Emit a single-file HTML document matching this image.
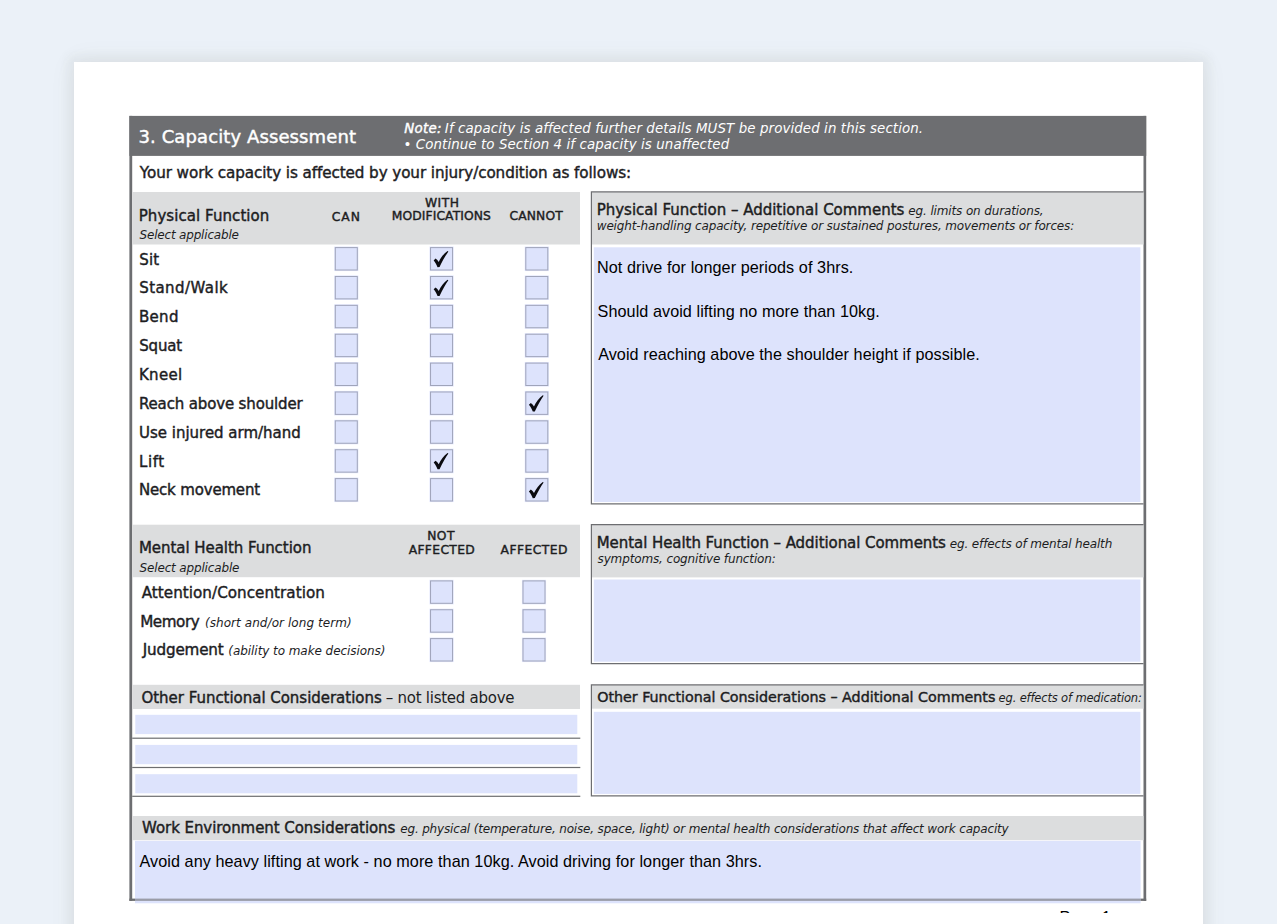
<!DOCTYPE html>
<html lang="en">
<head>
<meta charset="utf-8">
<title>Certificate of Capacity – 3. Capacity Assessment</title>
<style>
*{box-sizing:border-box;margin:0;padding:0}
html,body{width:1277px;height:924px;overflow:hidden;background:#ebf1f8}
body{position:relative;font-family:"DejaVu Sans","Liberation Sans",sans-serif;color:#1d1d1f}
#paper{position:absolute;left:74px;top:62px;width:1129.4px;height:900px;background:#fff;box-shadow:0 0 9px 6px rgba(100,98,70,.055),0 0 24px 0 rgba(100,98,70,.08)}
#shapes{position:absolute;left:0;top:0;width:1277px;height:924px}
.ln{fill:#6d6e71}.g{fill:#dcddde}.f{fill:#dde3fc}.bb{fill:#9a9ca8}
.ol{fill:none;stroke:#6d6e71;stroke-width:1.2}
.ch{fill:#e4e8fd}.cb{fill:#dde3fc;stroke:#9fa4ba;stroke-width:1}.ck{fill:#0b0b10}
.t{position:absolute;white-space:pre;line-height:1;color:#1d1d1f}
.w{color:#fff}
.m{-webkit-text-stroke:.42px currentColor}
.it{font-style:italic}
.bi{font-style:italic;font-weight:bold}
.ar{font-family:"Liberation Sans",sans-serif;color:#000}
#pg{position:absolute;left:1059.5px;top:910.4px;width:60px;height:2.8px;overflow:hidden}
</style>
</head>
<body>
<div id="paper"></div>
<!-- frame, panels, fields, checkboxes -->
<svg id="shapes" viewBox="0 0 1277 924">
<rect class="ln" x="129.4" y="115.9" width="2.8" height="785"/>
<rect class="ln" x="1143.5" y="115.9" width="2.7" height="785"/>
<rect class="ln" x="129.4" y="115.9" width="1016.8" height="40"/>
<rect class="g" x="132.2" y="192" width="447.8" height="52.5"/>
<rect class="g" x="132.2" y="524.7" width="447.8" height="52.5"/>
<rect class="g" x="132.2" y="684.8" width="447.8" height="24.2"/>
<rect class="g" x="132.2" y="816" width="1011.3" height="24.2"/>
<rect class="g" x="591.4" y="191.9" width="552.1" height="52.6"/>
<rect class="f" x="593.8" y="247.3" width="546.6" height="254.7"/>
<path class="ol" d="M1143.5 191.9H591.4V503.9H1143.5"/>
<rect class="g" x="591.4" y="524.7" width="552.1" height="52.7"/>
<rect class="f" x="593.8" y="579.5" width="546.6" height="82.2"/>
<path class="ol" d="M1143.5 524.7H591.4V663.7H1143.5"/>
<rect class="g" x="591.4" y="684.9" width="552.1" height="23.8"/>
<rect class="f" x="593.8" y="711.8" width="546.6" height="82.1"/>
<path class="ol" d="M1143.5 684.9H591.4V795.8H1143.5"/>
<rect class="f" x="135.3" y="714.8" width="442" height="19.3"/>
<rect class="ln" x="132.2" y="737.6" width="448.1" height="1.2"/>
<rect class="f" x="135.3" y="744.9" width="442" height="19.3"/>
<rect class="ln" x="132.2" y="766.9" width="448.1" height="1.2"/>
<rect class="f" x="135.3" y="774.2" width="442" height="19.1"/>
<rect class="ln" x="132.2" y="795.7" width="448.1" height="1.2"/>
<rect class="f" x="135" y="840.9" width="1005.6" height="62.4"/>
<rect class="bb" x="135" y="898.6" width="1005.6" height="2.3"/>
<rect class="ln" x="129.4" y="898.6" width="5.6" height="2.3"/>
<rect class="ln" x="1140.6" y="898.6" width="5.6" height="2.3"/>
<rect class="ch" x="334.2" y="246.5" width="24.2" height="24.6"/>
<rect class="cb" x="335.3" y="247.6" width="22" height="22.4"/>
<rect class="ch" x="429.45" y="246.5" width="24.2" height="24.6"/>
<rect class="cb" x="430.55" y="247.6" width="22" height="22.4"/>
<path class="ck" transform="translate(430.05 247.1)" d="M3.6 13.3 L5.5 11.5 C6.8 12.4 7.9 13.5 8.7 14.9 C10.6 10.6 13.8 6.4 17.5 3.8 L18.3 4.3 C15.8 8 12.6 13.2 9.5 20 L7.5 20.1 C6.6 17.6 5.3 15.2 3.6 13.3 Z"/>
<rect class="ch" x="524.7" y="246.5" width="24.2" height="24.6"/>
<rect class="cb" x="525.8" y="247.6" width="22" height="22.4"/>
<rect class="ch" x="334.2" y="275.38" width="24.2" height="24.6"/>
<rect class="cb" x="335.3" y="276.48" width="22" height="22.4"/>
<rect class="ch" x="429.45" y="275.38" width="24.2" height="24.6"/>
<rect class="cb" x="430.55" y="276.48" width="22" height="22.4"/>
<path class="ck" transform="translate(430.05 275.98)" d="M3.6 13.3 L5.5 11.5 C6.8 12.4 7.9 13.5 8.7 14.9 C10.6 10.6 13.8 6.4 17.5 3.8 L18.3 4.3 C15.8 8 12.6 13.2 9.5 20 L7.5 20.1 C6.6 17.6 5.3 15.2 3.6 13.3 Z"/>
<rect class="ch" x="524.7" y="275.38" width="24.2" height="24.6"/>
<rect class="cb" x="525.8" y="276.48" width="22" height="22.4"/>
<rect class="ch" x="334.2" y="304.25" width="24.2" height="24.6"/>
<rect class="cb" x="335.3" y="305.35" width="22" height="22.4"/>
<rect class="ch" x="429.45" y="304.25" width="24.2" height="24.6"/>
<rect class="cb" x="430.55" y="305.35" width="22" height="22.4"/>
<rect class="ch" x="524.7" y="304.25" width="24.2" height="24.6"/>
<rect class="cb" x="525.8" y="305.35" width="22" height="22.4"/>
<rect class="ch" x="334.2" y="333.13" width="24.2" height="24.6"/>
<rect class="cb" x="335.3" y="334.23" width="22" height="22.4"/>
<rect class="ch" x="429.45" y="333.13" width="24.2" height="24.6"/>
<rect class="cb" x="430.55" y="334.23" width="22" height="22.4"/>
<rect class="ch" x="524.7" y="333.13" width="24.2" height="24.6"/>
<rect class="cb" x="525.8" y="334.23" width="22" height="22.4"/>
<rect class="ch" x="334.2" y="362" width="24.2" height="24.6"/>
<rect class="cb" x="335.3" y="363.1" width="22" height="22.4"/>
<rect class="ch" x="429.45" y="362" width="24.2" height="24.6"/>
<rect class="cb" x="430.55" y="363.1" width="22" height="22.4"/>
<rect class="ch" x="524.7" y="362" width="24.2" height="24.6"/>
<rect class="cb" x="525.8" y="363.1" width="22" height="22.4"/>
<rect class="ch" x="334.2" y="390.88" width="24.2" height="24.6"/>
<rect class="cb" x="335.3" y="391.98" width="22" height="22.4"/>
<rect class="ch" x="429.45" y="390.88" width="24.2" height="24.6"/>
<rect class="cb" x="430.55" y="391.98" width="22" height="22.4"/>
<rect class="ch" x="524.7" y="390.88" width="24.2" height="24.6"/>
<rect class="cb" x="525.8" y="391.98" width="22" height="22.4"/>
<path class="ck" transform="translate(525.3 391.48)" d="M3.6 13.3 L5.5 11.5 C6.8 12.4 7.9 13.5 8.7 14.9 C10.6 10.6 13.8 6.4 17.5 3.8 L18.3 4.3 C15.8 8 12.6 13.2 9.5 20 L7.5 20.1 C6.6 17.6 5.3 15.2 3.6 13.3 Z"/>
<rect class="ch" x="334.2" y="419.75" width="24.2" height="24.6"/>
<rect class="cb" x="335.3" y="420.85" width="22" height="22.4"/>
<rect class="ch" x="429.45" y="419.75" width="24.2" height="24.6"/>
<rect class="cb" x="430.55" y="420.85" width="22" height="22.4"/>
<rect class="ch" x="524.7" y="419.75" width="24.2" height="24.6"/>
<rect class="cb" x="525.8" y="420.85" width="22" height="22.4"/>
<rect class="ch" x="334.2" y="448.63" width="24.2" height="24.6"/>
<rect class="cb" x="335.3" y="449.73" width="22" height="22.4"/>
<rect class="ch" x="429.45" y="448.63" width="24.2" height="24.6"/>
<rect class="cb" x="430.55" y="449.73" width="22" height="22.4"/>
<path class="ck" transform="translate(430.05 449.23)" d="M3.6 13.3 L5.5 11.5 C6.8 12.4 7.9 13.5 8.7 14.9 C10.6 10.6 13.8 6.4 17.5 3.8 L18.3 4.3 C15.8 8 12.6 13.2 9.5 20 L7.5 20.1 C6.6 17.6 5.3 15.2 3.6 13.3 Z"/>
<rect class="ch" x="524.7" y="448.63" width="24.2" height="24.6"/>
<rect class="cb" x="525.8" y="449.73" width="22" height="22.4"/>
<rect class="ch" x="334.2" y="477.5" width="24.2" height="24.6"/>
<rect class="cb" x="335.3" y="478.6" width="22" height="22.4"/>
<rect class="ch" x="429.45" y="477.5" width="24.2" height="24.6"/>
<rect class="cb" x="430.55" y="478.6" width="22" height="22.4"/>
<rect class="ch" x="524.7" y="477.5" width="24.2" height="24.6"/>
<rect class="cb" x="525.8" y="478.6" width="22" height="22.4"/>
<path class="ck" transform="translate(525.3 478.1)" d="M3.6 13.3 L5.5 11.5 C6.8 12.4 7.9 13.5 8.7 14.9 C10.6 10.6 13.8 6.4 17.5 3.8 L18.3 4.3 C15.8 8 12.6 13.2 9.5 20 L7.5 20.1 C6.6 17.6 5.3 15.2 3.6 13.3 Z"/>
<rect class="ch" x="429.45" y="579.8" width="24.2" height="24.6"/>
<rect class="cb" x="430.55" y="580.9" width="22" height="22.4"/>
<rect class="ch" x="521.9" y="579.8" width="24.2" height="24.6"/>
<rect class="cb" x="523" y="580.9" width="22" height="22.4"/>
<rect class="ch" x="429.45" y="608.65" width="24.2" height="24.6"/>
<rect class="cb" x="430.55" y="609.75" width="22" height="22.4"/>
<rect class="ch" x="521.9" y="608.65" width="24.2" height="24.6"/>
<rect class="cb" x="523" y="609.75" width="22" height="22.4"/>
<rect class="ch" x="429.45" y="637.5" width="24.2" height="24.6"/>
<rect class="cb" x="430.55" y="638.6" width="22" height="22.4"/>
<rect class="ch" x="521.9" y="637.5" width="24.2" height="24.6"/>
<rect class="cb" x="523" y="638.6" width="22" height="22.4"/>
</svg>
<!-- text -->
<div class="t w m" style="left:138.48px;top:127.75px;font-size:18px;letter-spacing:0.106px">3. Capacity Assessment</div>
<div class="t w m it" style="left:404.13px;top:122.00px;font-size:13.4px;letter-spacing:0.313px">Note:</div>
<div class="t w it" style="left:444.87px;top:122.00px;font-size:13.4px;letter-spacing:0.091px">If capacity is affected further details MUST be provided in this section.</div>
<div class="t w it" style="left:403.48px;top:138.00px;font-size:13.4px;letter-spacing:0.083px">• Continue to Section 4 if capacity is unaffected</div>
<div class="t m" style="left:139.83px;top:165.80px;font-size:15.2px;letter-spacing:-0.094px">Your work capacity is affected by your injury/condition as follows:</div>
<div class="t m" style="left:138.72px;top:208.50px;font-size:15px;letter-spacing:0.062px">Physical Function</div>
<div class="t it" style="left:139.54px;top:229.00px;font-size:12px;letter-spacing:-0.183px">Select applicable</div>
<div class="t m" style="left:331.83px;top:210.50px;font-size:12.3px;letter-spacing:0.912px">CAN</div>
<div class="t m" style="left:424.90px;top:196.90px;font-size:12.3px;letter-spacing:0.520px">WITH</div>
<div class="t m" style="left:391.76px;top:210.30px;font-size:12.3px;letter-spacing:0.094px">MODIFICATIONS</div>
<div class="t m" style="left:509.53px;top:210.30px;font-size:12.3px;letter-spacing:0.124px">CANNOT</div>
<div class="t m" style="left:139.21px;top:252.60px;font-size:15px;letter-spacing:0.188px">Sit</div>
<div class="t m" style="left:139.21px;top:281.45px;font-size:15px;letter-spacing:0.437px">Stand/Walk</div>
<div class="t m" style="left:138.95px;top:310.30px;font-size:15px;letter-spacing:0.324px">Bend</div>
<div class="t m" style="left:139.21px;top:339.15px;font-size:15px;letter-spacing:-0.168px">Squat</div>
<div class="t m" style="left:138.95px;top:368.00px;font-size:15px;letter-spacing:0.302px">Kneel</div>
<div class="t m" style="left:138.95px;top:396.85px;font-size:15px;letter-spacing:-0.149px">Reach above shoulder</div>
<div class="t m" style="left:139.07px;top:425.70px;font-size:15px;letter-spacing:-0.017px">Use injured arm/hand</div>
<div class="t m" style="left:138.95px;top:454.55px;font-size:15px;letter-spacing:0.593px">Lift</div>
<div class="t m" style="left:138.95px;top:483.40px;font-size:15px;letter-spacing:-0.172px">Neck movement</div>
<div class="t m" style="left:596.72px;top:203.00px;font-size:15px;letter-spacing:-0.009px">Physical Function – Additional Comments</div>
<div class="t it" style="left:908.31px;top:205.00px;font-size:12px;letter-spacing:-0.135px">eg. limits on durations,</div>
<div class="t it" style="left:596.73px;top:220.00px;font-size:12px;letter-spacing:-0.149px">weight-handling capacity, repetitive or sustained postures, movements or forces:</div>
<div class="t ar" style="left:596.94px;top:259.00px;font-size:16.2px;letter-spacing:0.075px">Not drive for longer periods of 3hrs.</div>
<div class="t ar" style="left:597.58px;top:302.50px;font-size:16.2px;letter-spacing:0.062px">Should avoid lifting no more than 10kg.</div>
<div class="t ar" style="left:598.16px;top:346.20px;font-size:16.2px;letter-spacing:0.058px">Avoid reaching above the shoulder height if possible.</div>
<div class="t m" style="left:138.94px;top:541.20px;font-size:15px;letter-spacing:-0.050px">Mental Health Function</div>
<div class="t it" style="left:139.54px;top:562.00px;font-size:12px;letter-spacing:-0.154px">Select applicable</div>
<div class="t m" style="left:427.13px;top:530.20px;font-size:12.3px;letter-spacing:0.510px">NOT</div>
<div class="t m" style="left:408.70px;top:543.60px;font-size:12.3px;letter-spacing:0.346px">AFFECTED</div>
<div class="t m" style="left:500.51px;top:543.60px;font-size:12.3px;letter-spacing:0.470px">AFFECTED</div>
<div class="t m" style="left:141.70px;top:585.60px;font-size:15.2px;letter-spacing:0.023px">Attention/Concentration</div>
<div class="t m" style="left:140.14px;top:614.80px;font-size:15.2px;letter-spacing:-0.419px">Memory</div>
<div class="t it" style="left:204.97px;top:616.80px;font-size:12px;letter-spacing:0.067px">(short and/or long term)</div>
<div class="t m" style="left:142.75px;top:643.30px;font-size:15.2px;letter-spacing:-0.180px">Judgement</div>
<div class="t it" style="left:228.37px;top:645.30px;font-size:12px;letter-spacing:-0.064px">(ability to make decisions)</div>
<div class="t m" style="left:596.74px;top:536.10px;font-size:15px;letter-spacing:-0.064px">Mental Health Function – Additional Comments</div>
<div class="t it" style="left:949.78px;top:538.10px;font-size:12px;letter-spacing:-0.146px">eg. effects of mental health</div>
<div class="t it" style="left:597.55px;top:553.20px;font-size:12px;letter-spacing:-0.140px">symptoms, cognitive function:</div>
<div class="t m" style="left:141.47px;top:690.80px;font-size:15px;letter-spacing:-0.028px">Other Functional Considerations</div>
<div class="t" style="left:385.73px;top:690.80px;font-size:15px;letter-spacing:-0.253px">– not listed above</div>
<div class="t m" style="left:597.22px;top:690.30px;font-size:14.3px;letter-spacing:-0.033px">Other Functional Considerations – Additional Comments</div>
<div class="t it" style="left:998.60px;top:693.30px;font-size:11.5px;letter-spacing:-0.157px">eg. effects of medication:</div>
<div class="t m" style="left:142.03px;top:821.10px;font-size:15px;letter-spacing:-0.058px">Work Environment Considerations</div>
<div class="t it" style="left:400.24px;top:823.10px;font-size:12px;letter-spacing:-0.172px">eg. physical (temperature, noise, space, light) or mental health considerations that affect work capacity</div>
<div class="t ar" style="left:139.47px;top:852.60px;font-size:16.2px;letter-spacing:0.067px">Avoid any heavy lifting at work - no more than 10kg. Avoid driving for longer than 3hrs.</div>
<div id="pg"><div class="t ar" style="left:0;top:-1.6px;font-size:16.2px">Page 1</div></div>
</body>
</html>
